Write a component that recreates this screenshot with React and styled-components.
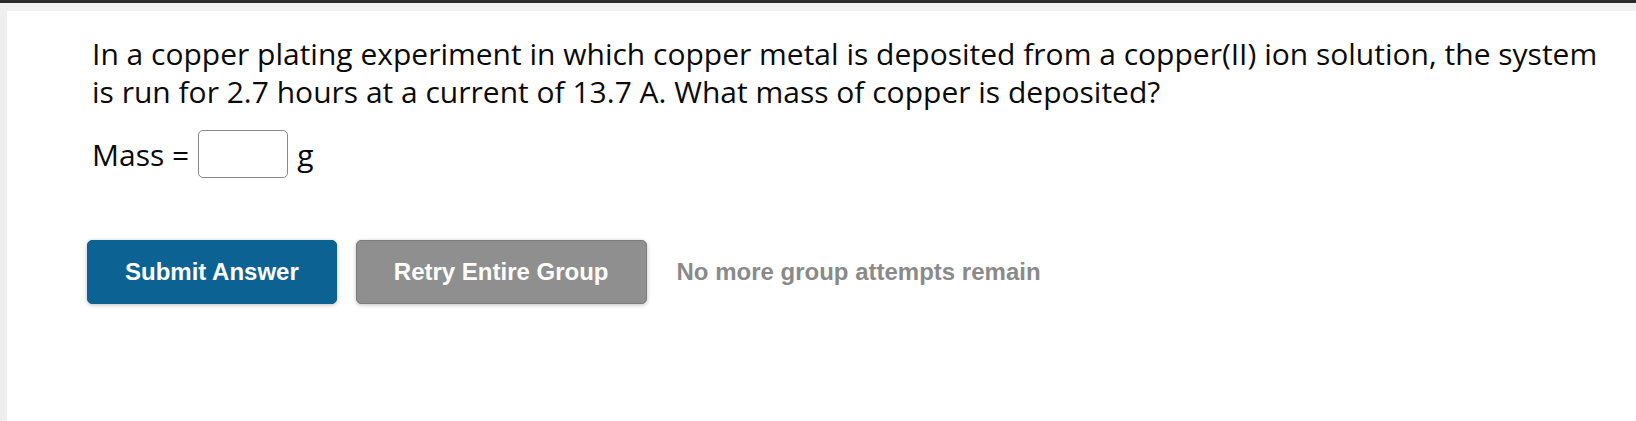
import React from 'react'
import styled, { createGlobalStyle } from 'styled-components'

const GlobalStyle = createGlobalStyle`
  html, body {
    margin: 0;
    padding: 0;
    background: #efefef;
  }
  body {
    border-top: 3px solid #2b2b2b;
  }
`

const Page = styled.div`
  min-height: 418px;
  box-sizing: border-box;
  padding: 8px 0 0 7px;
  display: flex;
`

const Panel = styled.div`
  flex: 1;
  background: #ffffff;
  padding: 24px 20px 0 85px;
`

const Question = styled.p`
  margin: 0;
  font-family: 'Open Sans', sans-serif;
  font-size: 30px;
  line-height: 38px;
  color: #0a0a0a;
  max-width: 1560px;
`

const AnswerRow = styled.div`
  display: flex;
  align-items: center;
  gap: 9px;
  margin-top: 19px;
  font-family: 'Open Sans', sans-serif;
  font-size: 30px;
  color: #0a0a0a;
`

const Input = styled.input`
  box-sizing: border-box;
  width: 90px;
  height: 48px;
  border: 1.5px solid #8a8a8a;
  border-radius: 5px;
  margin: 0;
`

const Actions = styled.div`
  display: flex;
  align-items: center;
  margin: 62px 0 0 -5px;
`

const Button = styled.button`
  box-sizing: border-box;
  height: 64px;
  padding: 0 37px;
  margin-right: ${(p) => p.$gap || 0}px;
  border-radius: 5px;
  border: 1px solid ${(p) => (p.$muted ? '#7c7c7c' : '#0d6293')};
  background: ${(p) => (p.$muted ? '#8f8f8f' : '#0d6294')};
  color: #ffffff;
  font-family: 'Liberation Sans', Arial, sans-serif;
  font-weight: bold;
  font-size: 24px;
  box-shadow: 0 1px 4px rgba(0, 0, 0, 0.25);
`

const Notice = styled.span`
  font-family: 'Liberation Sans', Arial, sans-serif;
  font-weight: bold;
  font-size: 24px;
  color: #8a8a8a;
`

const App = () => (
  <Page>
    <GlobalStyle />
    <Panel>
      <Question>
        In a copper plating experiment in which copper metal is deposited from a copper(II) ion
        solution, the system is run for 2.7 hours at a current of 13.7 A. What mass of copper is
        deposited?
      </Question>
      <AnswerRow>
        <span>Mass =</span>
        <Input type="text" />
        <span>g</span>
      </AnswerRow>
      <Actions>
        <Button $gap={19}>Submit Answer</Button>
        <Button $muted $gap={30}>Retry Entire Group</Button>
        <Notice>No more group attempts remain</Notice>
      </Actions>
    </Panel>
  </Page>
)

export default App
